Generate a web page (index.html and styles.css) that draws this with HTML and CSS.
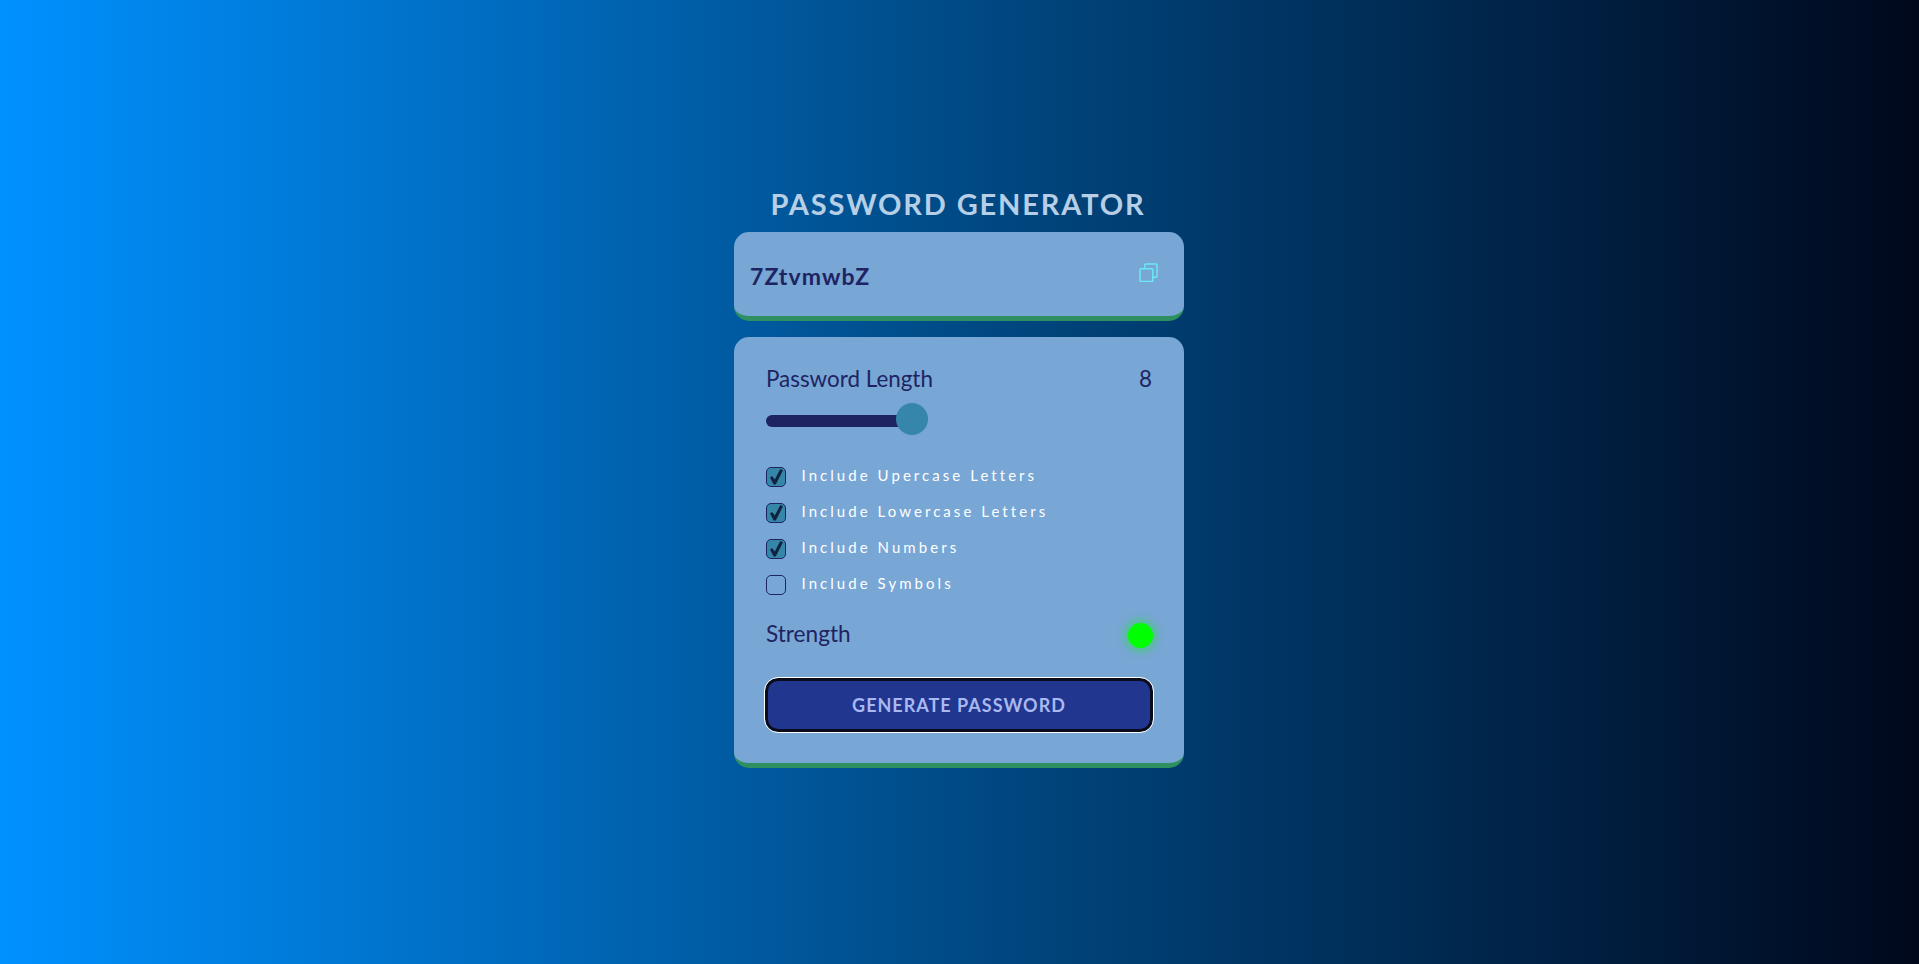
FILE: index.html
```html
<!DOCTYPE html>
<html lang="en">
<head>
<meta charset="utf-8">
<title>Password Generator</title>
<link rel="stylesheet" href="styles.css">
</head>
<body>
<main class="app">
  <h1 class="title">PASSWORD GENERATOR</h1>
  <section class="display">
    <span class="password">7ZtvmwbZ</span>
    <svg class="copy" viewBox="0 0 20 20" fill="none" stroke="currentColor" stroke-width="1.5" stroke-linejoin="round" aria-hidden="true">
      <path d="M6 5V2a1 1 0 0 1 1-1h11a1 1 0 0 1 1 1v12a1 1 0 0 1-1 1h-3.5"/>
      <rect x="1" y="6" width="13.5" height="13.5" rx="1"/>
    </svg>
  </section>
  <section class="panel">
    <div class="row">
      <span class="row-label">Password Length</span>
      <span class="row-label">8</span>
    </div>
    <div class="slider"><span class="track"></span><span class="thumb"></span></div>
    <ul class="options">
      <li class="option"><span class="box on"><svg viewBox="0 0 18 18" class="tick"><path d="M3 9.6 5 8 7.8 11.5 13.3 1 16 2.3 8.8 16.5 6.6 16.5Z"/></svg></span><span>Include Upercase Letters</span></li>
      <li class="option"><span class="box on"><svg viewBox="0 0 18 18" class="tick"><path d="M3 9.6 5 8 7.8 11.5 13.3 1 16 2.3 8.8 16.5 6.6 16.5Z"/></svg></span><span>Include Lowercase Letters</span></li>
      <li class="option"><span class="box on"><svg viewBox="0 0 18 18" class="tick"><path d="M3 9.6 5 8 7.8 11.5 13.3 1 16 2.3 8.8 16.5 6.6 16.5Z"/></svg></span><span>Include Numbers</span></li>
      <li class="option"><span class="box"></span><span>Include Symbols</span></li>
    </ul>
    <div class="row strength">
      <span class="row-label strength-label">Strength</span>
      <span class="dot"></span>
    </div>
    <button class="generate" type="button">GENERATE PASSWORD</button>
  </section>
</main>
</body>
</html>
```

FILE: styles.css
```css
* { box-sizing: border-box; }
html, body { height: 100%; margin: 0; }
body {
  background: linear-gradient(to right, #0091ff 0%, #004a85 50%, #00081c 100%);
  font-family: Lato, "Open Sans", sans-serif;
  display: flex;
  align-items: flex-start;
  justify-content: center;
  overflow: hidden;
}
.app {
  width: 450px;
  margin: 185px 1px 0 0;
  display: flex;
  flex-direction: column;
}
.title {
  margin: 0;
  height: 47px;
  font-size: 29px;
  line-height: 38px;
  font-weight: 700;
  letter-spacing: 1.85px;
  text-align: center;
  color: #b6cfe6;
  transform: translateX(-1px);
}
.display {
  height: 89px;
  padding: 4px 26px 0 16px;
  background: #78a6d5;
  border-radius: 15px;
  border-bottom: 5px solid #2e9060;
  display: flex;
  align-items: center;
  justify-content: space-between;
}
.password {
  font-size: 23px;
  font-weight: 700;
  letter-spacing: 1.1px;
  color: #1e2461;
}
.copy { width: 19px; height: 19px; color: #6aeaf7; margin-bottom: 7px; }
.panel {
  margin-top: 16px;
  height: 431px;
  padding: 28px 32px 0;
  background: #78a6d5;
  border-radius: 15px;
  border-bottom: 5px solid #2e9060;
  display: flex;
  flex-direction: column;
}
.row { display: flex; align-items: center; justify-content: space-between; }
.row-label { font-size: 22.4px; line-height: 28px; color: #1e2461; }
.strength-label { margin-bottom: 2px; font-size: 22.6px; }
.slider { position: relative; height: 32px; margin-top: 10px; }
.track {
  position: absolute;
  left: 0;
  top: 12px;
  width: 140px;
  height: 12px;
  border-radius: 6px;
  background: #1e2461;
}
.thumb {
  position: absolute;
  left: 130px;
  top: 0;
  width: 32px;
  height: 32px;
  border-radius: 50%;
  background: #3586a8;
}
.options {
  list-style: none;
  margin: 32px 0 0;
  padding: 0;
  display: flex;
  flex-direction: column;
  gap: 16px;
}
.option {
  display: flex;
  align-items: center;
  gap: 16px;
  height: 20px;
  font-size: 15px;
  letter-spacing: 3.05px;
  color: #fff;
}
.option > span:last-child { margin-bottom: 4px; margin-left: -0.5px; }
.box {
  flex: none;
  width: 20px;
  height: 20px;
  border: 1px solid #1e2461;
  border-radius: 5px;
}
.box.on { background: #3586a8; }
.tick { display: block; width: 18px; height: 18px; }
.tick path { fill: #12233f; }
.strength { margin-top: 25px; height: 30px; }
.dot {
  width: 25px;
  height: 25px;
  margin-right: -1px;
  border-radius: 50%;
  background: #0f0;
  box-shadow: 0 0 8px 3px rgba(0, 255, 0, .42);
}
.generate {
  display: block;
  width: 388px;
  height: 54px;
  margin: 28px -1px 0;
  border: 3px solid #0a0c1c;
  outline: 1px solid #fff;
  border-radius: 13px;
  background: #20368f;
  color: #a9b9f0;
  font: 700 18px Lato, sans-serif;
  letter-spacing: 1px;
}
```
